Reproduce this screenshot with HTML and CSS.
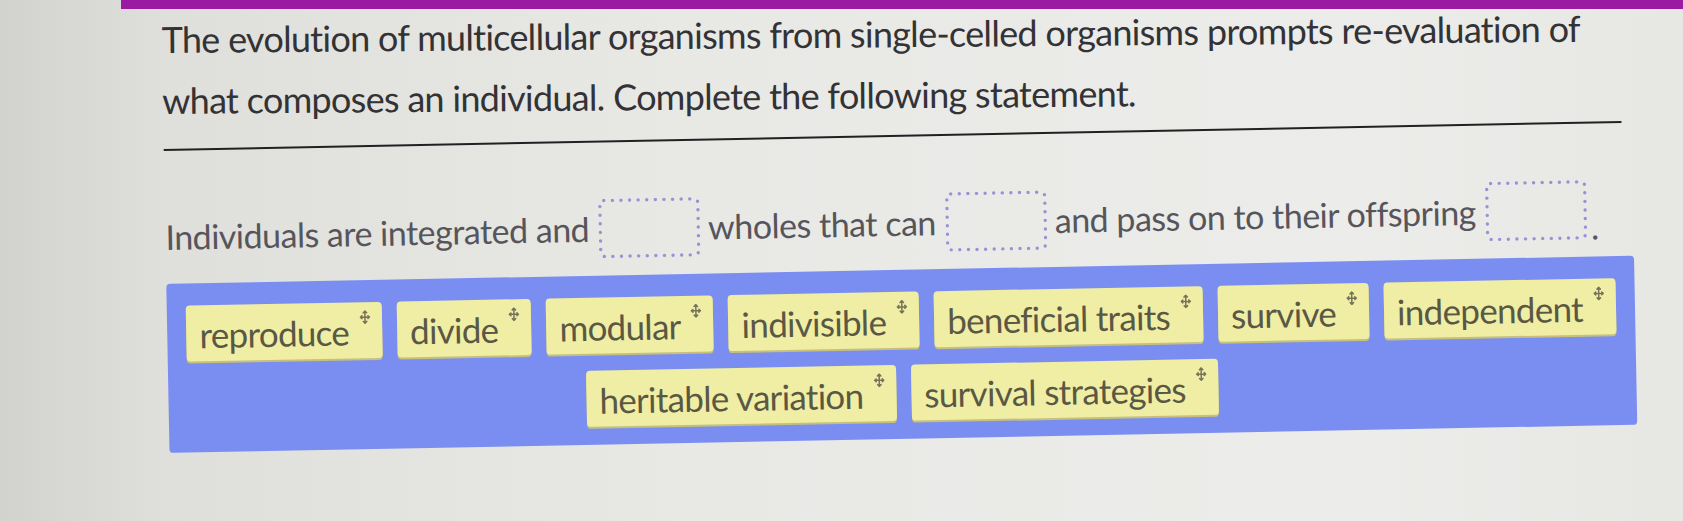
FILE: index.html
```html
<!DOCTYPE html>
<html lang="en">
<head>
<meta charset="utf-8">
<title>Multicellular individuality</title>
<link rel="stylesheet" href="styles.css">
</head>
<body>
<div class="topbar"></div>
<main class="page">
  <h1 class="question">The evolution of multicellular organisms from single-celled organisms prompts re-evaluation of what composes an individual. Complete the following statement.</h1>
  <hr class="rule">
  <p class="sentence">Individuals are integrated and<span class="blank"><svg viewBox="0 0 102 60" preserveAspectRatio="none"><rect x="2" y="2" width="98" height="56" rx="4" fill="none" stroke="#9891d6" stroke-width="3.4" stroke-linecap="round" stroke-dasharray="0 8.6"/></svg></span>wholes that can<span class="blank"><svg viewBox="0 0 102 60" preserveAspectRatio="none"><rect x="2" y="2" width="98" height="56" rx="4" fill="none" stroke="#9891d6" stroke-width="3.4" stroke-linecap="round" stroke-dasharray="0 8.6"/></svg></span>and pass on to their offspring<span class="blank"><svg viewBox="0 0 102 60" preserveAspectRatio="none"><rect x="2" y="2" width="98" height="56" rx="4" fill="none" stroke="#9891d6" stroke-width="3.4" stroke-linecap="round" stroke-dasharray="0 8.6"/></svg></span><span class="dot">.</span></p>
  <section class="bank">
    <div class="chip">reproduce<svg class="move" viewBox="0 0 12 14"><path d="M6 0.8v12.4M1.5 7h9M6 0.8l-1.7 1.9M6 0.8l1.7 1.9M6 13.2l-1.7-1.9M6 13.2l1.7-1.9M1.5 7l1.5-1.4M1.5 7l1.5 1.4M10.5 7l-1.5-1.4M10.5 7l-1.5 1.4"/></svg></div>
    <div class="chip">divide<svg class="move" viewBox="0 0 12 14"><path d="M6 0.8v12.4M1.5 7h9M6 0.8l-1.7 1.9M6 0.8l1.7 1.9M6 13.2l-1.7-1.9M6 13.2l1.7-1.9M1.5 7l1.5-1.4M1.5 7l1.5 1.4M10.5 7l-1.5-1.4M10.5 7l-1.5 1.4"/></svg></div>
    <div class="chip">modular<svg class="move" viewBox="0 0 12 14"><path d="M6 0.8v12.4M1.5 7h9M6 0.8l-1.7 1.9M6 0.8l1.7 1.9M6 13.2l-1.7-1.9M6 13.2l1.7-1.9M1.5 7l1.5-1.4M1.5 7l1.5 1.4M10.5 7l-1.5-1.4M10.5 7l-1.5 1.4"/></svg></div>
    <div class="chip">indivisible<svg class="move" viewBox="0 0 12 14"><path d="M6 0.8v12.4M1.5 7h9M6 0.8l-1.7 1.9M6 0.8l1.7 1.9M6 13.2l-1.7-1.9M6 13.2l1.7-1.9M1.5 7l1.5-1.4M1.5 7l1.5 1.4M10.5 7l-1.5-1.4M10.5 7l-1.5 1.4"/></svg></div>
    <div class="chip">beneficial traits<svg class="move" viewBox="0 0 12 14"><path d="M6 0.8v12.4M1.5 7h9M6 0.8l-1.7 1.9M6 0.8l1.7 1.9M6 13.2l-1.7-1.9M6 13.2l1.7-1.9M1.5 7l1.5-1.4M1.5 7l1.5 1.4M10.5 7l-1.5-1.4M10.5 7l-1.5 1.4"/></svg></div>
    <div class="chip">survive<svg class="move" viewBox="0 0 12 14"><path d="M6 0.8v12.4M1.5 7h9M6 0.8l-1.7 1.9M6 0.8l1.7 1.9M6 13.2l-1.7-1.9M6 13.2l1.7-1.9M1.5 7l1.5-1.4M1.5 7l1.5 1.4M10.5 7l-1.5-1.4M10.5 7l-1.5 1.4"/></svg></div>
    <div class="chip">independent<svg class="move" viewBox="0 0 12 14"><path d="M6 0.8v12.4M1.5 7h9M6 0.8l-1.7 1.9M6 0.8l1.7 1.9M6 13.2l-1.7-1.9M6 13.2l1.7-1.9M1.5 7l1.5-1.4M1.5 7l1.5 1.4M10.5 7l-1.5-1.4M10.5 7l-1.5 1.4"/></svg></div>
    <div class="chip">heritable variation<svg class="move" viewBox="0 0 12 14"><path d="M6 0.8v12.4M1.5 7h9M6 0.8l-1.7 1.9M6 0.8l1.7 1.9M6 13.2l-1.7-1.9M6 13.2l1.7-1.9M1.5 7l1.5-1.4M1.5 7l1.5 1.4M10.5 7l-1.5-1.4M10.5 7l-1.5 1.4"/></svg></div>
    <div class="chip">survival strategies<svg class="move" viewBox="0 0 12 14"><path d="M6 0.8v12.4M1.5 7h9M6 0.8l-1.7 1.9M6 0.8l1.7 1.9M6 13.2l-1.7-1.9M6 13.2l1.7-1.9M1.5 7l1.5-1.4M1.5 7l1.5 1.4M10.5 7l-1.5-1.4M10.5 7l-1.5 1.4"/></svg></div>
  </section>
</main>
</body>
</html>
```
FILE: styles.css
```css
html, body {
  margin: 0;
  height: 100%;
}
body {
  background: linear-gradient(90deg, #d2d2ce 0%, #dfdfdb 10%, #e8e8e5 40%, #ececea 80%, #e7e7e4 100%);
  font-family: Lato, "Open Sans", sans-serif;
  overflow: hidden;
}
.topbar {
  height: 9px;
  margin-left: 121px;
  background: #9a1ba2;
}
.page {
  padding-left: 161px;
  width: 1472px;
  transform: rotate(-1.1deg);
  transform-origin: 161px 0;
}
.question {
  margin: 0;
  width: 1440px;
  font-size: 36px;
  line-height: 61px;
  font-weight: 400;
  letter-spacing: -0.7px;
  color: #333235;
  transform: rotate(0.65deg);
  transform-origin: 0 30px;
}
.rule {
  margin: 18px 0 0;
  width: 1458px;
  height: 0;
  border: 0;
  border-top: 2.5px solid #232024;
}
.sentence {
  margin: 54px 0 0;
  font-size: 34px;
  line-height: 64px;
  letter-spacing: -0.5px;
  color: #57555c;
  display: flex;
  align-items: center;
}
.blank {
  display: inline-flex;
  width: 102px;
  height: 60px;
  margin: 0 8px 0 9px;
}
.blank svg {
  width: 100%;
  height: 100%;
}
.dot {
  align-self: flex-end;
  line-height: 30px;
  margin-left: -4px;
}
.bank {
  margin-top: 15px;
  width: 1440px;
  padding: 22px 14px 18px;
  background: #7a8ef1;
  border-radius: 4px;
  display: flex;
  flex-wrap: wrap;
  justify-content: center;
  column-gap: 15px;
  row-gap: 17px;
}
.chip {
  position: relative;
  height: 56px;
  line-height: 58px;
  padding: 0 33px 0 13px;
  background: #efeea4;
  border-radius: 4px;
  box-shadow: 0 2px 0 #c7c07a;
  font-size: 35px;
  letter-spacing: -0.7px;
  color: #5a5845;
}
.move {
  position: absolute;
  top: 8px;
  right: 11px;
  width: 12px;
  height: 14px;
  fill: none;
  stroke: #76735a;
  stroke-width: 1.5;
  stroke-linecap: round;
}
```
